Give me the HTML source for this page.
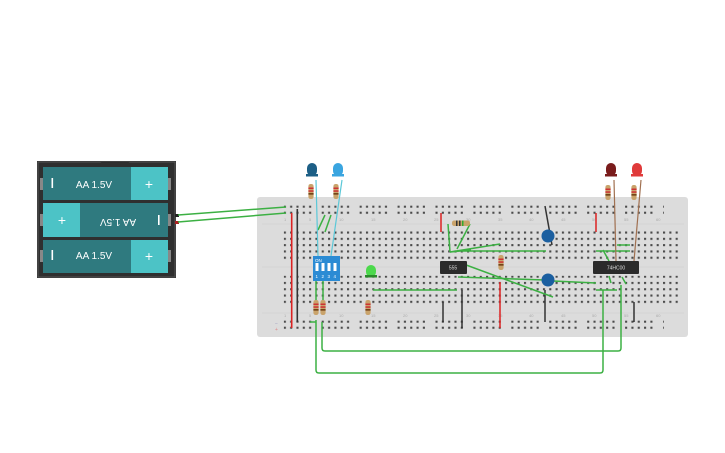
<!DOCTYPE html>
<html><head><meta charset="utf-8"><style>
html,body{margin:0;padding:0;background:#fff;width:725px;height:453px;overflow:hidden}
svg{display:block}
text{font-family:"Liberation Sans",sans-serif}
</style></head><body>
<svg width="725" height="453" viewBox="0 0 725 453" xmlns="http://www.w3.org/2000/svg">
<defs>
<pattern id="term" patternUnits="userSpaceOnUse" x="283.8" y="231.5" width="6.32" height="6.3">
<rect x="0" y="0" width="2.1" height="2.1" fill="#4a4a4a"/></pattern>
<pattern id="rail" patternUnits="userSpaceOnUse" x="283.8" y="205.6" width="37.92" height="6.1">
<rect x="0" y="0" width="2.1" height="2.1" fill="#4a4a4a"/><rect x="6.32" y="0" width="2.1" height="2.1" fill="#4a4a4a"/><rect x="12.64" y="0" width="2.1" height="2.1" fill="#4a4a4a"/><rect x="18.96" y="0" width="2.1" height="2.1" fill="#4a4a4a"/><rect x="25.28" y="0" width="2.1" height="2.1" fill="#4a4a4a"/></pattern>
<pattern id="rail2" patternUnits="userSpaceOnUse" x="283.8" y="320.6" width="37.92" height="6.1">
<rect x="0" y="0" width="2.1" height="2.1" fill="#4a4a4a"/><rect x="6.32" y="0" width="2.1" height="2.1" fill="#4a4a4a"/><rect x="12.64" y="0" width="2.1" height="2.1" fill="#4a4a4a"/><rect x="18.96" y="0" width="2.1" height="2.1" fill="#4a4a4a"/><rect x="25.28" y="0" width="2.1" height="2.1" fill="#4a4a4a"/></pattern>
<g id="resv"><rect x="-2.6" y="0" width="5.2" height="15" rx="2.2" fill="#c9a36b"/><rect x="-2.6" y="3.5" width="5.2" height="1.5" fill="#c33"/><rect x="-2.6" y="6.3" width="5.2" height="1.5" fill="#c33"/><rect x="-2.6" y="9.1" width="5.2" height="1.5" fill="#6a3a10"/></g>
</defs>

<rect x="37" y="161" width="139" height="117" fill="#2f2f2f"/>
<rect x="38" y="162" width="137" height="115" fill="none" stroke="#555" stroke-width="1"/>
<g>
<rect x="43" y="167" width="125" height="33" fill="#2f7a7f"/><rect x="131" y="167" width="37" height="33" fill="#4cc3c6"/>
<text x="94" y="188" fill="#fff" font-size="10" text-anchor="middle">AA 1.5V</text>
<text x="149" y="189" fill="#fff" font-size="14" text-anchor="middle">+</text><rect x="51.5" y="178" width="1.6" height="10" fill="#fff"/>
<rect x="43" y="203" width="125" height="34" fill="#2f7a7f"/><rect x="43" y="203" width="37" height="34" fill="#4cc3c6"/>
<text x="118" y="219" fill="#fff" font-size="10" text-anchor="middle" transform="rotate(180 118 219)">AA 1.5V</text>
<text x="62" y="225" fill="#fff" font-size="14" text-anchor="middle">+</text><rect x="158" y="215" width="1.6" height="10" fill="#fff"/>
<rect x="43" y="240" width="125" height="33" fill="#2f7a7f"/><rect x="131" y="240" width="37" height="33" fill="#4cc3c6"/>
<text x="94" y="259" fill="#fff" font-size="10" text-anchor="middle">AA 1.5V</text>
<text x="149" y="261" fill="#fff" font-size="14" text-anchor="middle">+</text><rect x="51.5" y="250" width="1.6" height="10" fill="#fff"/>
<rect x="40" y="178" width="3" height="12" fill="#888"/><rect x="168" y="178" width="3" height="12" fill="#888"/>
<rect x="40" y="214" width="3" height="12" fill="#888"/><rect x="168" y="214" width="3" height="12" fill="#888"/>
<rect x="40" y="250" width="3" height="12" fill="#888"/><rect x="168" y="250" width="3" height="12" fill="#888"/>
<rect x="100" y="162" width="30" height="5" rx="2" fill="#2f2f2f"/>
</g>
<rect x="175" y="214" width="4" height="3" fill="#222"/><rect x="175" y="221" width="4" height="3" fill="#a22"/>

<rect x="257" y="197" width="431" height="140" rx="3" fill="#dcdcdc"/>
<line x1="262" y1="224" x2="684" y2="224" stroke="#ccc" stroke-width="0.6"/>
<line x1="262" y1="267" x2="684" y2="267" stroke="#ccc" stroke-width="0.6"/>
<line x1="262" y1="313" x2="684" y2="313" stroke="#ccc" stroke-width="0.6"/>
<rect x="283.8" y="205.6" width="380" height="9" fill="url(#rail)"/>
<rect x="283.8" y="320.6" width="380" height="9" fill="url(#rail2)"/>
<rect x="283.8" y="231.5" width="395" height="31" fill="url(#term)"/>
<rect x="283.8" y="275.8" width="395" height="31" fill="url(#term)"/>
<g font-size="4" fill="#aaa">
<text x="284" y="221">1</text><text x="309" y="221">5</text><text x="339" y="221">10</text><text x="371" y="221">15</text><text x="403" y="221">20</text><text x="434" y="221">25</text><text x="466" y="221">30</text><text x="498" y="221">35</text><text x="529" y="221">40</text><text x="561" y="221">45</text><text x="592" y="221">50</text><text x="624" y="221">55</text><text x="656" y="221">60</text>
<text x="284" y="317">1</text><text x="309" y="317">5</text><text x="339" y="317">10</text><text x="371" y="317">15</text><text x="403" y="317">20</text><text x="434" y="317">25</text><text x="466" y="317">30</text><text x="498" y="317">35</text><text x="529" y="317">40</text><text x="561" y="317">45</text><text x="592" y="317">50</text><text x="624" y="317">55</text><text x="656" y="317">60</text>
</g>
<text x="275" y="325" font-size="5" fill="#99b">−</text><text x="275" y="331" font-size="5" fill="#d88">+</text>

<line x1="291.7" y1="213" x2="291.7" y2="328" stroke="#d22" stroke-width="1.6"/>
<line x1="297.3" y1="209" x2="297.3" y2="322" stroke="#333" stroke-width="1.6"/>
<line x1="441" y1="213" x2="441" y2="232" stroke="#d22" stroke-width="1.5"/>
<line x1="596" y1="213" x2="596" y2="232" stroke="#d22" stroke-width="1.5"/>
<line x1="500" y1="282" x2="500" y2="328" stroke="#d22" stroke-width="1.5"/>
<line x1="443" y1="302" x2="443" y2="322" stroke="#333" stroke-width="1.5"/>
<line x1="462" y1="290" x2="462" y2="328" stroke="#333" stroke-width="1.5"/>
<line x1="545" y1="290" x2="545" y2="322" stroke="#333" stroke-width="1.5"/>
<line x1="634" y1="302" x2="634" y2="322" stroke="#333" stroke-width="1.5"/>
<line x1="545" y1="206" x2="552" y2="245" stroke="#333" stroke-width="1.5"/>

<g stroke="#3cb043" stroke-width="1.5" fill="none">
<line x1="178" y1="215" x2="286" y2="207"/>
<line x1="178" y1="222" x2="286" y2="213"/>
<line x1="318" y1="230" x2="325" y2="215"/>
<line x1="325" y1="232" x2="331" y2="215"/>
<line x1="316" y1="281" x2="316" y2="300"/>
<line x1="323" y1="281" x2="323" y2="300"/>
<path d="M316 320 V370 Q316 373 319 373 H600 Q603 373 603 370 V290"/>
<path d="M322 322 V348 Q322 351 325 351 H618 Q621 351 621 348 V285"/>
<path d="M310 322 H316"/>
<line x1="373" y1="290" x2="457" y2="290"/>
<line x1="448" y1="224" x2="450" y2="252"/>
<line x1="450" y1="252" x2="471" y2="250"/>
<line x1="450" y1="252" x2="500" y2="244"/>
<line x1="457" y1="249" x2="470" y2="224"/>
<line x1="462" y1="251" x2="546" y2="251"/>
<line x1="458" y1="262" x2="553" y2="297"/>
<line x1="458" y1="277" x2="545" y2="280"/>
<line x1="553" y1="281" x2="596" y2="283"/>
<line x1="596" y1="251" x2="630" y2="251"/>
<line x1="603" y1="250" x2="609" y2="261"/>
<line x1="617" y1="245" x2="630" y2="245"/>
<line x1="609" y1="276" x2="611" y2="283"/>
<line x1="622" y1="277" x2="626" y2="284"/>
<line x1="596" y1="290" x2="617" y2="290"/>
</g>

<rect x="440" y="261" width="27" height="13" rx="1" fill="#2b2b2b"/>
<text x="453" y="269.5" font-size="5" fill="#ddd" text-anchor="middle">555</text>
<rect x="593" y="261" width="46" height="13" rx="1" fill="#2b2b2b"/>
<text x="616" y="269.5" font-size="5" fill="#ddd" text-anchor="middle">74HC00</text>

<rect x="313" y="256" width="27" height="25" fill="#2b8bd4"/>
<text x="315" y="262" font-size="4.5" fill="#fff">ON</text>
<g fill="#fff"><rect x="315.5" y="263" width="3" height="8"/><rect x="321.5" y="263" width="3" height="8"/><rect x="327.5" y="263" width="3" height="8"/><rect x="333.5" y="263" width="3" height="8"/></g>
<g font-size="4.5" fill="#fff"><text x="315.5" y="278">1</text><text x="321.5" y="278">2</text><text x="327.5" y="278">3</text><text x="333.5" y="278">4</text></g>

<g stroke-width="1.2" fill="none">
<line x1="316" y1="180" x2="318" y2="256" stroke="#5bc8d8"/>
<line x1="342" y1="180" x2="331" y2="256" stroke="#5bc8d8"/>
<line x1="614" y1="180" x2="616" y2="261" stroke="#a07050"/>
<line x1="641" y1="180" x2="634" y2="261" stroke="#a07050"/>
</g>
<rect x="307" y="163" width="10" height="13" rx="5" fill="#1d5f86"/><rect x="306" y="174" width="12" height="2.5" fill="#1d5f86"/>
<rect x="333" y="163" width="10" height="13" rx="5" fill="#3aa5e0"/><rect x="332" y="174" width="12" height="2.5" fill="#3aa5e0"/>
<rect x="606" y="163" width="10" height="13" rx="5" fill="#7a1c1c"/><rect x="605" y="174" width="12" height="2.5" fill="#7a1c1c"/>
<rect x="632" y="163" width="10" height="13" rx="5" fill="#e03a3a"/><rect x="631" y="174" width="12" height="2.5" fill="#e03a3a"/>
<rect x="366" y="265" width="10" height="12" rx="5" fill="#4cd94c"/><rect x="365" y="275" width="12" height="2.5" fill="#2a8a2a"/>

<use href="#resv" x="311" y="184"/>
<use href="#resv" x="336" y="184"/>
<use href="#resv" x="316" y="300"/>
<use href="#resv" x="323" y="300"/>
<use href="#resv" x="368" y="300"/>
<use href="#resv" x="501" y="255"/>
<use href="#resv" x="608" y="185"/>
<use href="#resv" x="634" y="185"/>
<rect x="452" y="220.5" width="18" height="5.5" rx="2.2" fill="#c9a36b"/>
<rect x="456" y="220.5" width="1.5" height="5.5" fill="#333"/><rect x="459" y="220.5" width="1.5" height="5.5" fill="#333"/><rect x="462" y="220.5" width="1.5" height="5.5" fill="#3a3"/>

<circle cx="548" cy="236" r="6.5" fill="#1b5fa0"/>
<circle cx="548" cy="280" r="6.5" fill="#1b5fa0"/>
</svg>
</body></html>
